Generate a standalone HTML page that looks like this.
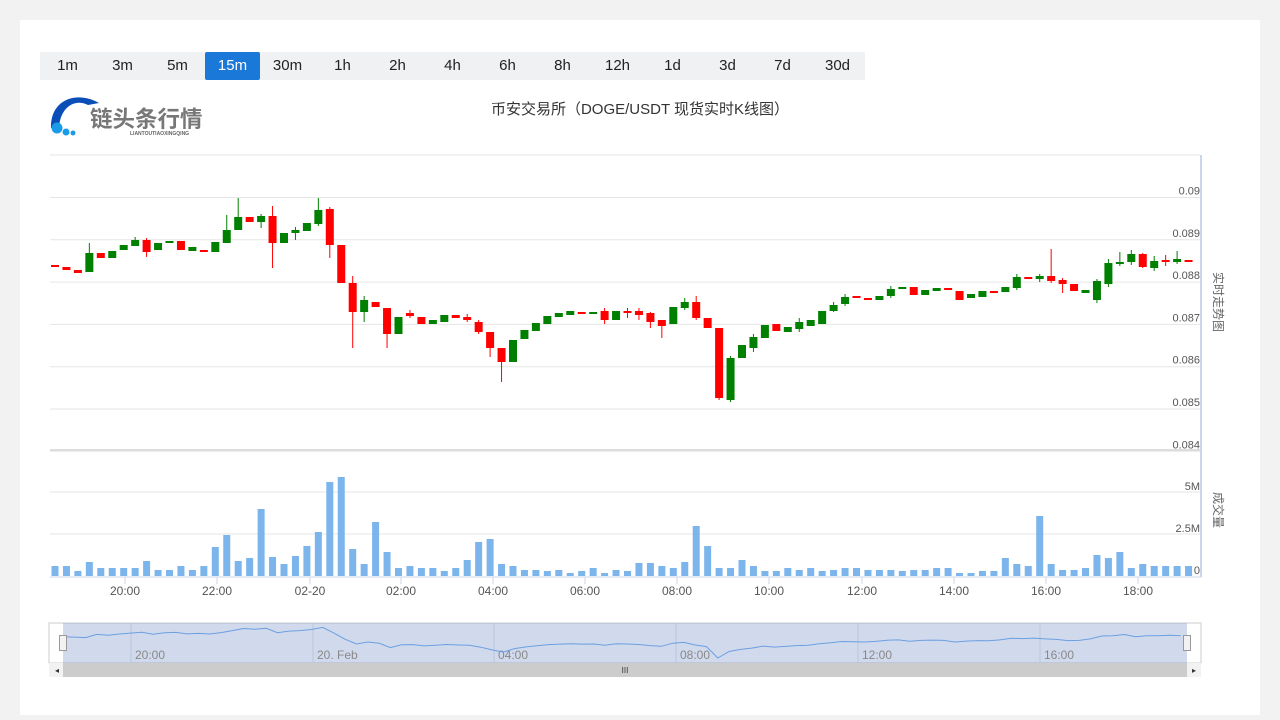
<!DOCTYPE html>
<html><head><meta charset="utf-8"><style>
body{margin:0;background:#f2f2f2;font-family:"Liberation Sans","Noto Sans CJK SC",sans-serif;}
#card{position:absolute;left:20px;top:20px;width:1240px;height:695px;background:#fff;}
#tabs{position:absolute;left:40px;top:52px;height:28px;width:825px;background:#f0f1f3;display:flex;}
#tabs div{width:55px;text-align:center;line-height:28px;font-size:15px;color:#222;}
#tabs div.on{background:#1a78d8;color:#fff;border-radius:2px;}
svg{position:absolute;left:0;top:0;}
</style></head><body>
<div id="card"></div>
<div id="tabs"><div>1m</div><div>3m</div><div>5m</div><div class="on">15m</div><div>30m</div><div>1h</div><div>2h</div><div>4h</div><div>6h</div><div>8h</div><div>12h</div><div>1d</div><div>3d</div><div>7d</div><div>30d</div></div>
<svg id="s" width="1280" height="720" xmlns="http://www.w3.org/2000/svg" font-family="Liberation Sans, Noto Sans CJK SC, sans-serif">
<path d="M51 128 C50 100 76 90 99 103 L88 105 C74 98 60 108 59 128 Z" fill="#0a4fb8"/>
<circle cx="57" cy="128" r="5.5" fill="#1a9be8"/><circle cx="66" cy="132" r="3.5" fill="#1a9be8"/><circle cx="73" cy="133" r="2.5" fill="#1a9be8"/>
<text x="90" y="127" font-size="22.5" font-weight="bold" fill="#777">链头条行情</text>
<text x="130" y="135" font-size="5" fill="#666" font-weight="bold">LIANTOUTIAOXINGQING</text>
<text x="640" y="114" font-size="15" fill="#333" text-anchor="middle">币安交易所（DOGE/USDT 现货实时K线图）</text>
<g id="g"></g>
</svg>
<script>
var g=document.getElementById('g'),h='';
function L(x1,y1,x2,y2,c,w){h+='<line x1="'+x1+'" y1="'+y1+'" x2="'+x2+'" y2="'+y2+'" stroke="'+c+'" stroke-width="'+(w||1)+'"/>';}
function T(x,y,t,a,s,c){h+='<text x="'+x+'" y="'+y+'" font-size="'+(s||11)+'" fill="'+(c||'#555')+'" text-anchor="'+(a||'end')+'">'+t+'</text>';}
L(50,155,1200,155,'#e6e6e6');
var pl=['0.09','0.089','0.088','0.087','0.086','0.085','0.084'];
for(var k=0;k<7;k++){var y=197.5+k*42.3;L(50,y,1200,y,'#e6e6e6');T(1200,y-3,pl[k]);}
L(50,450,1200,450,'#ddd',2);
L(50,492,1200,492,'#e6e6e6');T(1200,490,'5M');L(50,534,1200,534,'#e6e6e6');T(1200,532,'2.5M');T(1200,574,'0');
L(1201,155,1201,577,'#ccd6eb',2);L(50,577,1201,577,'#ccd6eb');
h+='<text x="1214" y="272" font-size="12" fill="#666" transform="rotate(90 1214 272)">实时走势图</text>';
h+='<text x="1214" y="492" font-size="12" fill="#666" transform="rotate(90 1214 492)">成交量</text>';
var C=[[0,265,267,0,0],[0,267,270],[0,270,273],[1,253,272,243,272],[0,253,258],[1,251,258],[1,245,250],[1,240,246,237,246],[0,240,252,238,257],[1,243,250],[1,241,243],[0,241,250],[1,247,251],[0,250,251],[1,242,252],[1,230,243,215,243],[1,217,230,198,230],[0,217,222],[1,216,222,214,228],[0,216,243,206,268],[1,233,243],[1,230,233,227,240],[1,223,231],[1,210,224,198,226],[0,209,245,207,258],[0,245,283],[0,283,312,276,348],[1,300,312,296,322],[0,302,307],[0,308,334,308,348],[1,317,334],[0,313,316,310,318],[0,317,324],[1,320,324],[1,315,322],[0,315,318],[0,317,320,314,322],[0,322,332,320,334],[0,332,348,332,357],[0,348,362,348,382],[1,340,362],[1,330,339],[1,323,331],[1,316,324],[1,313,317],[1,311,315],[0,312,313],[1,312,313],[0,311,320,308,324],[1,311,320],[0,311,312,308,318],[0,311,315,308,320],[0,313,322,312,328],[0,320,326,320,338],[1,307,324],[1,302,308,298,310],[0,302,318,296,320],[0,318,328],[0,328,398,328,400],[1,358,400,356,402],[1,345,358],[1,337,348,334,352],[1,325,338],[0,324,331],[1,327,332],[1,322,329,318,332],[1,320,326],[1,311,324],[1,305,311,302,312],[1,297,304,294,306],[0,296,298],[0,298,300],[1,296,300],[1,289,296,286,298],[1,287,289],[0,287,295],[1,290,295],[1,288,291],[0,288,290],[0,291,300],[1,294,298],[1,291,297],[0,291,292],[1,287,292],[1,277,288,274,290],[0,277,279],[1,276,279,274,282],[0,276,281,249,283],[0,280,284,278,293],[0,284,291],[1,290,293],[1,281,300,279,303],[1,263,284,259,287],[1,262,263,252,266],[1,254,262,250,265],[0,254,267,253,268],[1,261,268,256,271],[0,260,261,255,266],[1,259,262,251,264],[0,260,261]];
var V=[10,10,5,14,8,8,8,8,15,6,6,10,6,10,29,41,15,18,67,19,12,20,30,44,94,99,27,12,54,24,8,10,8,8,5,8,16,34,37,12,10,6,6,5,6,3,5,8,3,6,5,13,13,10,8,14,50,30,8,8,16,10,5,5,8,6,8,5,6,8,8,6,6,6,5,6,6,8,8,3,3,5,5,18,12,10,60,12,6,6,8,21,18,24,8,12,10,10,10,10];
var nav='';
for(var i=0;i<C.length;i++){var c=C[i],x=55+i*11.45,col=c[0]?'#008000':'#ff0000';
var t=c[1],b=c[2];if(b-t<2)b=t+2;
if(c[3]&&c[4])L(x,c[3],x,c[4],col);
h+='<rect x="'+(x-4)+'" y="'+t+'" width="8" height="'+(b-t)+'" fill="'+col+'"/>';
var v=V[i]||6;h+='<rect x="'+(x-3.5)+'" y="'+(576-v)+'" width="7" height="'+v+'" fill="#7cb5ec"/>';
var cl=c[0]?c[1]:c[2];nav+=(i?'L':'M')+(63+(x-55)*0.986).toFixed(1)+' '+(636+(cl-263)*0.163).toFixed(1)+' ';}
var xl=[[125,'20:00'],[217,'22:00'],[310,'02-20'],[401,'02:00'],[493,'04:00'],[585,'06:00'],[677,'08:00'],[769,'10:00'],[862,'12:00'],[954,'14:00'],[1046,'16:00'],[1138,'18:00']];
xl.forEach(function(a){L(a[0],577,a[0],584,'#ccd6eb');T(a[0],595,a[1],'middle',12);});
h+='<rect x="49" y="623" width="1152" height="40" fill="#fff" stroke="#ccc"/>';
h+='<rect x="63" y="623" width="1124" height="40" fill="rgba(102,133,194,0.3)"/>';
[[131,'20:00'],[313,'20. Feb'],[494,'04:00'],[676,'08:00'],[858,'12:00'],[1040,'16:00']].forEach(function(a){L(a[0],623,a[0],663,'#bcc6da');T(a[0]+4,659,a[1],'start',12,'#888');});
h+='<path d="'+nav+'" fill="none" stroke="#6b9fe0" stroke-width="1"/>';
h+='<rect x="49" y="663" width="1152" height="14" fill="#f2f2f2"/><rect x="63" y="663" width="1124" height="14" fill="#ccc"/>';
T(625,673,'III','middle',8,'#333');T(57,673,'◂','middle',8,'#333');T(1194,673,'▸','middle',8,'#333');
h+='<rect x="59.5" y="635.5" width="7" height="15" fill="#f2f2f2" stroke="#999"/><rect x="1183.5" y="635.5" width="7" height="15" fill="#f2f2f2" stroke="#999"/>';
g.innerHTML=h;
</script>
</body></html>
